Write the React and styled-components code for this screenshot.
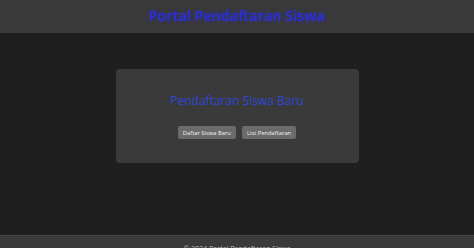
import styled, { createGlobalStyle } from 'styled-components';

const GlobalStyle = createGlobalStyle`
  body {
    margin: 0;
    background: #1f1f1f;
    font-family: "Open Sans", "Liberation Sans", sans-serif;
  }
`;

const Page = styled.div`
  min-height: 248px;
  display: flex;
  flex-direction: column;
`;

const Header = styled.header`
  height: 33px;
  background: #3a3a3a;
  display: flex;
  align-items: center;
  justify-content: center;
`;

const Title = styled.h1`
  margin: 0 0 2px;
  font-size: 14.5px;
  font-weight: 600;
  color: #2b2fd6;
  text-shadow: 0 0 4px rgba(40, 40, 220, 0.6);
`;

const Main = styled.main`
  height: 202px;
  display: flex;
  justify-content: center;
  align-items: flex-start;
  padding-top: 36px;
  box-sizing: border-box;
`;

const Card = styled.section`
  width: 243px;
  height: 94px;
  background: #3a3a3a;
  border-radius: 4px;
  display: flex;
  flex-direction: column;
  align-items: center;
  padding-top: 23px;
  box-sizing: border-box;
`;

const CardTitle = styled.h2`
  margin: 0;
  font-size: 12px;
  font-weight: 400;
  color: #3046d8;
`;

const ButtonRow = styled.div`
  display: flex;
  gap: 6px;
  margin-top: 17px;
`;

const Button = styled.button`
  background: #6b6b6b;
  color: #f2f2f2;
  border: none;
  border-radius: 2px;
  font-family: inherit;
  font-size: 5.8px;
  height: 13px;
  padding: 0 5px;
  cursor: pointer;
`;

const Footer = styled.footer`
  height: 13px;
  background: #3a3a3a;
  border-top: 1px solid #444;
  display: flex;
  justify-content: center;
  padding-top: 8px;
  box-sizing: border-box;
  overflow: hidden;
  color: #bbb;
  font-size: 7px;
  line-height: 10px;
`;

export default function App() {
  return (
    <Page>
      <GlobalStyle />
      <Header>
        <Title>Portal Pendaftaran Siswa</Title>
      </Header>
      <Main>
        <Card>
          <CardTitle>Pendaftaran Siswa Baru</CardTitle>
          <ButtonRow>
            <Button>Daftar Siswa Baru</Button>
            <Button>List Pendaftaran</Button>
          </ButtonRow>
        </Card>
      </Main>
      <Footer>© 2024 Portal Pendaftaran Siswa</Footer>
    </Page>
  );
}
